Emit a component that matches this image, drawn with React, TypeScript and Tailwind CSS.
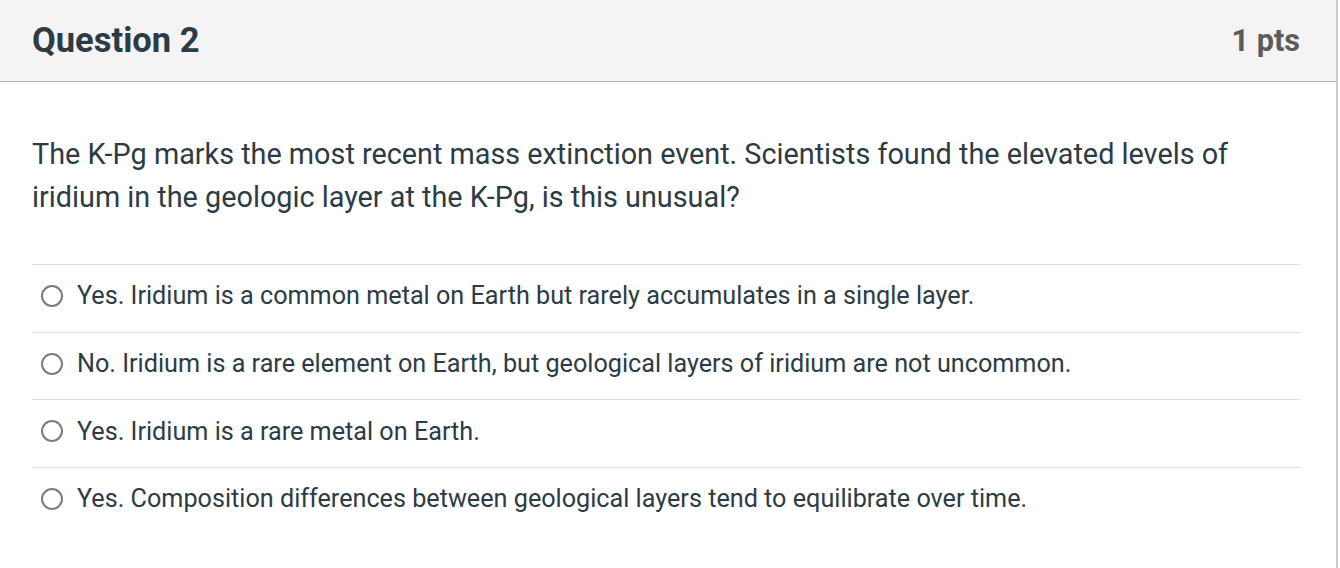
const answers = [
  "Yes. Iridium is a common metal on Earth but rarely accumulates in a single layer.",
  "No. Iridium is a rare element on Earth, but geological layers of iridium are not uncommon.",
  "Yes. Iridium is a rare metal on Earth.",
  "Yes. Composition differences between geological layers tend to equilibrate over time.",
];

export default function App() {
  return (
    <div className="w-[1340px] h-[568px] bg-white overflow-hidden font-['Roboto',sans-serif] text-[#2d3b45]">
      <div className="w-[1338px] h-full border-r-2 border-[#c7cdd1]">
        {/* Header */}
        <div className="h-[82px] flex items-center justify-between pl-[32px] pr-[36px] bg-[#f4f4f4] border-b border-[#b3b3b3]">
          <h2 className="text-[34.5px] font-bold">Question 2</h2>
          <span className="text-[30.6px] font-bold text-[#5b5b5b]">1 pts</span>
        </div>

        {/* Body */}
        <div className="pl-[32px] pr-[36px] pt-[51px]">
          <p className="text-[28.8px] leading-[43px]">
            The K-Pg marks the most recent mass extinction event. Scientists found the elevated levels of
            iridium in the geologic layer at the K-Pg, is this unusual?
          </p>

          <div className="mt-[45px]">
            {answers.map((a, i) => (
              <label key={i} className="flex items-center h-[67.6px] pb-[4px] border-t border-[#dedede]">
                <span className="ml-[9px] w-[22px] h-[22px] rounded-full border-[2px] border-[#7c7c7c] bg-white shrink-0" />
                <span className="ml-[14px] text-[25.2px]">{a}</span>
              </label>
            ))}
          </div>
        </div>
      </div>
    </div>
  );
}
